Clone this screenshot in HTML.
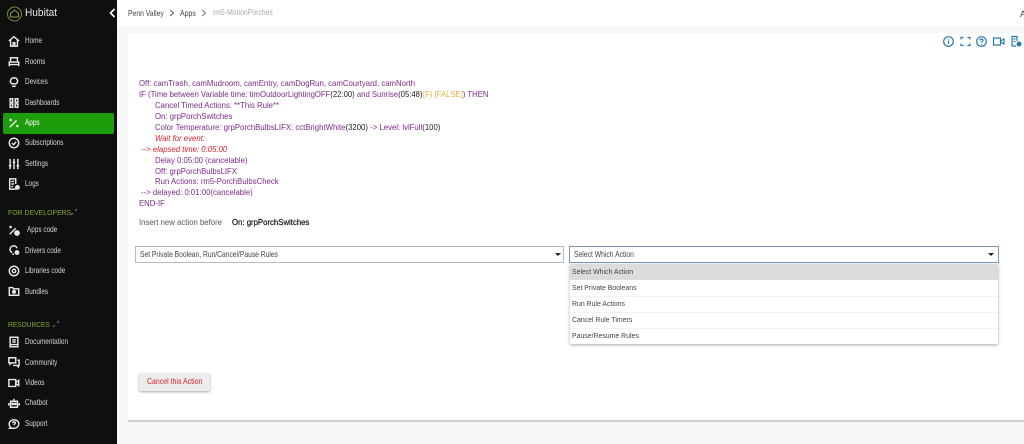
<!DOCTYPE html>
<html><head><meta charset="utf-8"><style>
html,body{margin:0;padding:0;width:1024px;height:444px;overflow:hidden;background:#f7f7f7;font-family:"Liberation Sans",sans-serif}
.a{position:absolute;white-space:nowrap}
#side{left:0;top:0;width:117px;height:444px;background:#0f0f10}
.n{position:absolute;left:25px;color:#d6d6d6;font-size:8px;line-height:12px;white-space:nowrap;transform:scaleX(.8);transform-origin:0 0}
.i{position:absolute;left:8px;width:12px;height:12px;margin-top:1px;fill:none;stroke:#e8e8e8;stroke-width:1.700}
.r{position:absolute;font-size:8.6px;line-height:12px;color:#7b2a87;white-space:nowrap;transform:scaleX(.905);transform-origin:0 0}
.o{position:absolute;left:570px;width:426px;font-size:7.6px;color:#444;line-height:16px;height:16px;padding-left:2px;box-sizing:content-box;border-bottom:1px solid #f2f2f2}
.o span{display:inline-block;transform:scaleX(.91);transform-origin:0 0}
.s{display:inline-block;transform-origin:0 0}
</style></head><body>
<div class="a" id="side"></div>
<svg class="a" style="left:5.500px;top:5px" width="18" height="18" viewBox="0 0 18 18" fill="none"><circle cx="8.500" cy="9" r="7" stroke="#6f8f3a" stroke-width="1"/><path d="M4.500 12V8.500L8.500 5l4 3.500V12z" stroke="#7fa33f" stroke-width="1"/></svg>
<div class="a" style="left:25px;top:6px;font-size:11px;line-height:14px;color:#e6e6e6;transform:scaleX(.92);transform-origin:0 0">Hubitat</div>
<svg class="a" style="left:109px;top:8px" width="7" height="10" viewBox="0 0 7 10" fill="none"><path d="M5.500 1L1.500 5l4 4" stroke="#fff" stroke-width="1.600"/></svg>
<div class="a" style="left:3px;top:113px;width:111px;height:21px;background:#1d9c0c;border-radius:2px"></div>

<svg class="i" style="top:34px" viewBox="0 0 14 14"><path d="M1 7l6-5 6 5M3 6v7h8V6M6 13V9h2v4"/></svg><div class="n" style="top:34.500px">Home</div>
<svg class="i" style="top:55px" viewBox="0 0 14 14"><path d="M3 6V2h8v4M1.500 12V7h11v5M1.500 10h11"/></svg><div class="n" style="top:55.500px">Rooms</div>
<svg class="i" style="top:75px" viewBox="0 0 14 14"><path d="M4.500 9C3 8 2.500 6.500 3 5c.5-2 2.200-3 4-3s3.500 1 4 3c.5 1.500 0 3-1.500 4zM5 12h4"/></svg><div class="n" style="top:76px">Devices</div>
<svg class="i" style="top:96px" viewBox="0 0 14 14"><path d="M2.500 2h3v4h-3zM8.500 2h3v4h-3zM2.500 8h3v4h-3zM8.500 8h3v4h-3z"/></svg><div class="n" style="top:96.500px">Dashboards</div>
<svg class="i" style="top:116px" viewBox="0 0 14 14"><path d="M2 12l8-8M3 2v3M1.500 3.500h3M11 9v3M9.500 10.500h3"/></svg><div class="n" style="top:116.500px;color:#fff">Apps</div>
<svg class="i" style="top:136px" viewBox="0 0 14 14"><circle cx="7" cy="7" r="5.500"/><path d="M4.500 7l2 2 3-3.500"/></svg><div class="n" style="top:137px">Subscriptions</div>
<svg class="i" style="top:157px" viewBox="0 0 14 14"><path d="M2.500 1v12M7 1v12M11.500 1v12M1 9h3M5.500 5h3M10 9h3"/></svg><div class="n" style="top:157.500px">Settings</div>
<svg class="i" style="top:177px" viewBox="0 0 14 14"><path d="M9 13H2V1h7v6M4 4h3M4 7h3M4 10h2"/><circle cx="11" cy="11" r="2" fill="#e8e8e8"/></svg><div class="n" style="top:178px">Logs</div>

<div class="a" style="left:8px;top:207px;font-size:7.500px;line-height:12px;color:#7fae2e;transform:scaleX(.92);transform-origin:0 0">FOR DEVELOPERS</div>
<svg class="a" style="left:70px;top:208px" width="8" height="8" viewBox="0 0 8 8" fill="none"><path d="M1 7l2-2M5 3l2-2" stroke="#777"/></svg>

<svg class="i" style="top:223px" viewBox="0 0 14 14"><path d="M2 12l7-7M3 2v3M1.500 3.500h3"/><circle cx="10.500" cy="10.500" r="2.500" fill="#e8e8e8"/></svg><div class="n" style="top:224px;left:27px">Apps code</div>
<svg class="i" style="top:243px" viewBox="0 0 14 14"><path d="M5 10C3 9 2 7.500 2.500 5.500 3 3 5 2 6.500 2c2 0 3.500 1.200 4 3M5 12h2"/><circle cx="10.500" cy="10" r="2" fill="#e8e8e8"/></svg><div class="n" style="top:244.500px">Drivers code</div>
<svg class="i" style="top:264px" viewBox="0 0 14 14"><circle cx="7" cy="7" r="5.500"/><circle cx="7" cy="7" r="2"/></svg><div class="n" style="top:265px">Libraries code</div>
<svg class="i" style="top:284px" viewBox="0 0 14 14"><path d="M1.500 3h4l1 1.500h6v7.500h-11z"/><circle cx="7" cy="8" r="1.500" fill="#e8e8e8"/></svg><div class="n" style="top:285.500px">Bundles</div>

<div class="a" style="left:8px;top:319px;font-size:7.500px;line-height:12px;color:#7fae2e;transform:scaleX(.88);transform-origin:0 0">RESOURCES</div>
<svg class="a" style="left:52px;top:320px" width="8" height="8" viewBox="0 0 8 8" fill="none"><path d="M1 7l2-2M5 3l2-2" stroke="#777"/></svg>

<svg class="i" style="top:335px" viewBox="0 0 14 14"><path d="M2.500 1.500h9v11h-9zM2.500 10h9M5 4.500h4M5 7h4"/></svg><div class="n" style="top:336px">Documentation</div>
<svg class="i" style="top:355px" viewBox="0 0 14 14"><path d="M1 2h8v6H4L2.500 9.500 2.500 8H1zM11 5h2v6h-1v1.500L10.500 11H6"/></svg><div class="n" style="top:356.500px">Community</div>
<svg class="i" style="top:376px" viewBox="0 0 14 14"><path d="M1 3h8v8H1zM9.500 6l3-2v6l-3-2"/></svg><div class="n" style="top:376.500px">Videos</div>
<svg class="i" style="top:396px" viewBox="0 0 14 14"><path d="M3 5h8v7H3zM7 5V2M1 7v3M13 7v3"/><circle cx="5.500" cy="8" r=".8" fill="#e8e8e8"/><circle cx="8.500" cy="8" r=".8" fill="#e8e8e8"/></svg><div class="n" style="top:397px">Chatbot</div>
<svg class="i" style="top:417px" viewBox="0 0 14 14"><path d="M3 11C1.500 9.500 1 8 1.500 6c.6-2.500 3-4 5.500-4s5 1.500 5.500 4c.5 3-2 6-5.500 6H2zM5.500 6c0-2 3-2 3 0 0 1-1.500 1-1.500 2.500"/></svg><div class="n" style="top:418px">Support</div>

<div class="a" style="left:117px;top:0;width:907px;height:26px;background:#fff"></div>
<div class="a" style="left:128px;top:7px;font-size:8.500px;line-height:12px;color:#444;transform:scaleX(.8);transform-origin:0 0">Penn Valley</div>
<svg class="a" style="left:169px;top:9px" width="6" height="8" viewBox="0 0 6 8" fill="none"><path d="M1 1l3.500 3L1 7" stroke="#555"/></svg>
<div class="a" style="left:180px;top:7px;font-size:8.500px;line-height:12px;color:#444;transform:scaleX(.82);transform-origin:0 0">Apps</div>
<svg class="a" style="left:201px;top:9px" width="6" height="8" viewBox="0 0 6 8" fill="none"><path d="M1 1l3.500 3L1 7" stroke="#777"/></svg>
<div class="a" style="left:213px;top:7px;font-size:7.800px;line-height:12px;color:#aaa;transform:scaleX(.88);transform-origin:0 0">rm5-MotionPorches</div>
<div class="a" style="left:1020px;top:8px;font-size:9px;line-height:12px;color:#444">A</div>

<div class="a" style="left:127.500px;top:33px;width:897px;height:387px;background:#fff;border-bottom:2px solid #ccc"></div>

<svg class="a" style="left:942px;top:35px" width="82" height="13" viewBox="0 0 82 13" fill="none" stroke="#2a78b0" stroke-width="1.200"><circle cx="6.500" cy="6.500" r="4.800"/><path d="M6.500 5.500v3.500M6.500 3.500v1"/><path d="M19 4.500V2.500h2.500M25.500 2.500H28v2M28 8.500v2h-2.500M21.500 10.500H19v-2"/><circle cx="39.500" cy="6.500" r="4.800"/><path d="M38 5.500c0-2 3-2 3 0 0 1-1.500 1-1.500 2.300M39.500 9v.8"/><path d="M51.500 3h7v7h-7zM58.500 6l3.500-2v5l-3.500-2"/><path d="M74 11h-4V1.500h5V6M71.500 4h2M71.500 6.500h2"/><circle cx="77" cy="9" r="2.500" fill="#2a78b0" stroke="none"/></svg>

<div class="r" style="left:139px;top:77px">Off: camTrash, camMudroom, camEntry, camDogRun, camCourtyard, camNorth</div>
<div class="r" style="left:139px;top:88px;transform:scaleX(.898)">IF (Time between Variable time: timOutdoorLightingOFF<span style="color:#222">(22:00)</span> and Sunrise<span style="color:#222">(05:48)</span><span style="color:#e8b23c">(F) [FALSE]</span>) THEN</div>
<div class="r" style="left:155px;top:99px">Cancel Timed Actions: **This Rule**</div>
<div class="r" style="left:155px;top:110px">On: grpPorchSwitches</div>
<div class="r" style="left:155px;top:121px">Color Temperature: grpPorchBulbsLIFX: cctBrightWhite<span style="color:#222">(3200)</span> -&gt; Level: lvlFull<span style="color:#222">(100)</span></div>
<div class="r" style="left:155px;top:132px;color:#d5202c;font-style:italic">Wait for event:</div>
<div class="r" style="left:141px;top:143px;color:#d5202c;font-style:italic">--&gt; elapsed time: 0:05:00</div>
<div class="r" style="left:155px;top:154px">Delay 0:05:00 (cancelable)</div>
<div class="r" style="left:155px;top:165px">Off: grpPorchBulbsLIFX</div>
<div class="r" style="left:155px;top:175px">Run Actions: rm5-PorchBulbsCheck</div>
<div class="r" style="left:141px;top:186px">--&gt; delayed: 0:01:00(cancelable)</div>
<div class="r" style="left:139px;top:197px">END-IF</div>
<div class="r" style="left:139px;top:216px;color:#555">Insert new action before</div>
<div class="r" style="left:232px;top:216px;color:#111;-webkit-text-stroke:.2px #111">On: grpPorchSwitches</div>

<div class="a" style="left:135px;top:246px;width:427px;height:15px;border:1px solid #b5bcc4;background:#fff;font-size:7.800px;line-height:15px;color:#444"><span class="s" style="margin-left:4px;transform:scaleX(.86)">Set Private Boolean, Run/Cancel/Pause Rules</span></div>
<div class="a" style="left:555px;top:253px;width:0;height:0;border:3px solid transparent;border-top:3px solid #222;border-bottom:0"></div>
<div class="a" style="left:569px;top:246px;width:428px;height:15px;border:1px solid #7f95b8;background:#fff;font-size:7.800px;line-height:15px;color:#444"><span class="s" style="margin-left:4px;transform:scaleX(.87)">Select Which Action</span></div>
<div class="a" style="left:988px;top:253px;width:0;height:0;border:3px solid transparent;border-top:3px solid #222;border-bottom:0"></div>

<div class="a" style="left:570px;top:264px;width:428px;height:80px;background:#fff;box-shadow:0 1px 3px rgba(0,0,0,.35)"></div>
<div class="a" style="left:570px;top:264px;width:428px;height:16px;background:#dcdcdc"></div>
<div class="o a" style="top:264px;border:0"><span>Select Which Action</span></div>
<div class="o a" style="top:280px"><span>Set Private Booleans</span></div>
<div class="o a" style="top:296px"><span>Run Rule Actions</span></div>
<div class="o a" style="top:312px"><span>Cancel Rule Timers</span></div>
<div class="o a" style="top:328px;border:0"><span>Pause/Resume Rules</span></div>

<div class="a" style="left:139px;top:373px;width:71px;height:18px;background:#ececec;box-shadow:0 1px 2px rgba(0,0,0,.35);border-radius:1px"></div>
<div class="a" style="left:147px;top:373px;color:#d5202c;font-size:8px;line-height:18px;transform:scaleX(.87);transform-origin:0 0">Cancel this Action</div>
</body></html>
